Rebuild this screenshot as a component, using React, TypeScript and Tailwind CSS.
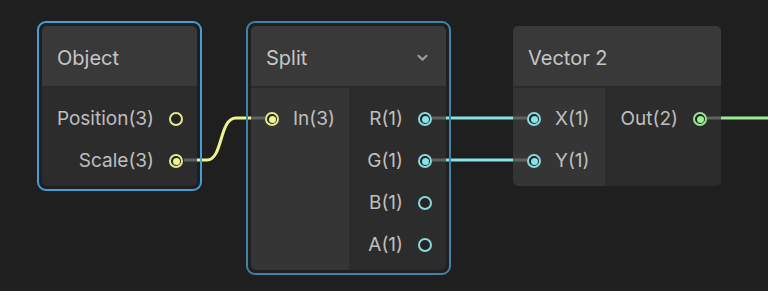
import React from 'react';

type PortType = 'v3' | 'v1' | 'v2';

interface Slot {
  label: string;
  type: PortType;
  connected?: boolean;
}

interface NodeProps {
  x: number;
  y: number;
  width: number;
  leftWidth?: number;
  title: string;
  selected?: string;
  chevron?: boolean;
  inputs?: Slot[];
  outputs?: Slot[];
}

const portRing: Record<PortType, string> = {
  v3: 'border-[#e4e98e]',
  v1: 'border-[#8ad9dc]',
  v2: 'border-[#98e58f]',
};

const portDot: Record<PortType, string> = {
  v3: 'bg-[#eef58f]',
  v1: 'bg-[#84e4e7]',
  v2: 'bg-[#9aef92]',
};

const Port = ({ type, connected }: { type: PortType; connected?: boolean }) => (
  <div className={`w-[14px] h-[14px] shrink-0 rounded-full border-2 ${portRing[type]} bg-[#242424] flex items-center justify-center`}>
    {connected && <div className={`w-[7px] h-[7px] rounded-full ${portDot[type]}`} />}
  </div>
);

const Node = ({ x, y, width, leftWidth, title, selected, chevron, inputs = [], outputs = [] }: NodeProps) => (
  <div className="absolute" style={{ left: x, top: y, width }}>
    {selected && (
      <div className={`absolute -inset-[5px] rounded-[9px] border-2 ${selected}`} />
    )}
    <div className="relative rounded-[5px] overflow-hidden">
      <div className="h-[62px] bg-[#393939] border-b-2 border-[#2a2a2a] flex items-center justify-between pt-[3px] pl-[15px] pr-[18px]">
        <span className="text-[20px] text-[#c6c6c6]">{title}</span>
        {chevron && (
          <svg width="11" height="8" viewBox="0 0 11 8">
            <path d="M1.5 1.8 L5.5 5.6 L9.5 1.8" fill="none" stroke="#9b9b9b" strokeWidth="2.2" strokeLinecap="round" strokeLinejoin="round" />
          </svg>
        )}
      </div>
      <div className="flex">
        {inputs.length > 0 && (
          <div className="bg-[#353535] pt-[10px] pb-[4px] shrink-0" style={{ width: leftWidth }}>
            {inputs.map(s => (
              <div key={s.label} className="h-[42px] flex items-center pl-[14px] gap-[14px]">
                <Port type={s.type} connected={s.connected} />
                <span className="text-[19px] text-[#bfbfbf]">{s.label}</span>
              </div>
            ))}
          </div>
        )}
        <div className="flex-1 bg-[#2c2c2c] pt-[10px] pb-[4px]">
          {outputs.map(s => (
            <div key={s.label} className="h-[42px] flex items-center justify-end pr-[14px] gap-[15px]">
              <span className="text-[19px] text-[#bfbfbf]">{s.label}</span>
              <Port type={s.type} connected={s.connected} />
            </div>
          ))}
        </div>
      </div>
    </div>
  </div>
);

export default function App() {
  return (
    <div className="relative w-[768px] h-[291px] overflow-hidden bg-[#1f1f1f]" style={{ fontFamily: 'Inter, "Noto Sans", sans-serif' }}>
      {/* wires under the nodes */}
      <svg className="absolute inset-0" width="768" height="291">
        <path d="M185 160 L207 160 C223 160 219 118 236 118 L262 118" fill="none" stroke="#eef58f" strokeWidth="3" />
        <line x1="440" y1="118" x2="520" y2="118" stroke="#84e4e7" strokeWidth="3" />
        <line x1="440" y1="160" x2="520" y2="160" stroke="#84e4e7" strokeWidth="3" />
        <line x1="715" y1="118" x2="768" y2="118" stroke="#9aef92" strokeWidth="3" />
      </svg>

      <Node
        x={42}
        y={26}
        width={155}
        title="Object"
        selected="border-[#41a0d6]"
        outputs={[
          { label: 'Position(3)', type: 'v3' },
          { label: 'Scale(3)', type: 'v3', connected: true },
        ]}
      />
      <Node
        x={251}
        y={26}
        width={195}
        leftWidth={98}
        title="Split"
        chevron
        selected="border-[#3f84a8]"
        inputs={[{ label: 'In(3)', type: 'v3', connected: true }]}
        outputs={[
          { label: 'R(1)', type: 'v1', connected: true },
          { label: 'G(1)', type: 'v1', connected: true },
          { label: 'B(1)', type: 'v1' },
          { label: 'A(1)', type: 'v1' },
        ]}
      />
      <Node
        x={513}
        y={26}
        width={208}
        leftWidth={92}
        title="Vector 2"
        inputs={[
          { label: 'X(1)', type: 'v1', connected: true },
          { label: 'Y(1)', type: 'v1', connected: true },
        ]}
        outputs={[{ label: 'Out(2)', type: 'v2', connected: true }]}
      />

      {/* faded wire stubs inside the nodes */}
      <svg className="absolute inset-0 pointer-events-none" width="768" height="291">
        <g stroke="#5e6262" strokeWidth="3">
          <line x1="184" y1="160" x2="197" y2="160" />
          <line x1="251" y1="118" x2="265" y2="118" />
          <line x1="432" y1="118" x2="446" y2="118" />
          <line x1="432" y1="160" x2="446" y2="160" />
          <line x1="513" y1="118" x2="527" y2="118" />
          <line x1="513" y1="160" x2="527" y2="160" />
          <line x1="707" y1="118" x2="721" y2="118" />
        </g>
      </svg>
    </div>
  );
}
